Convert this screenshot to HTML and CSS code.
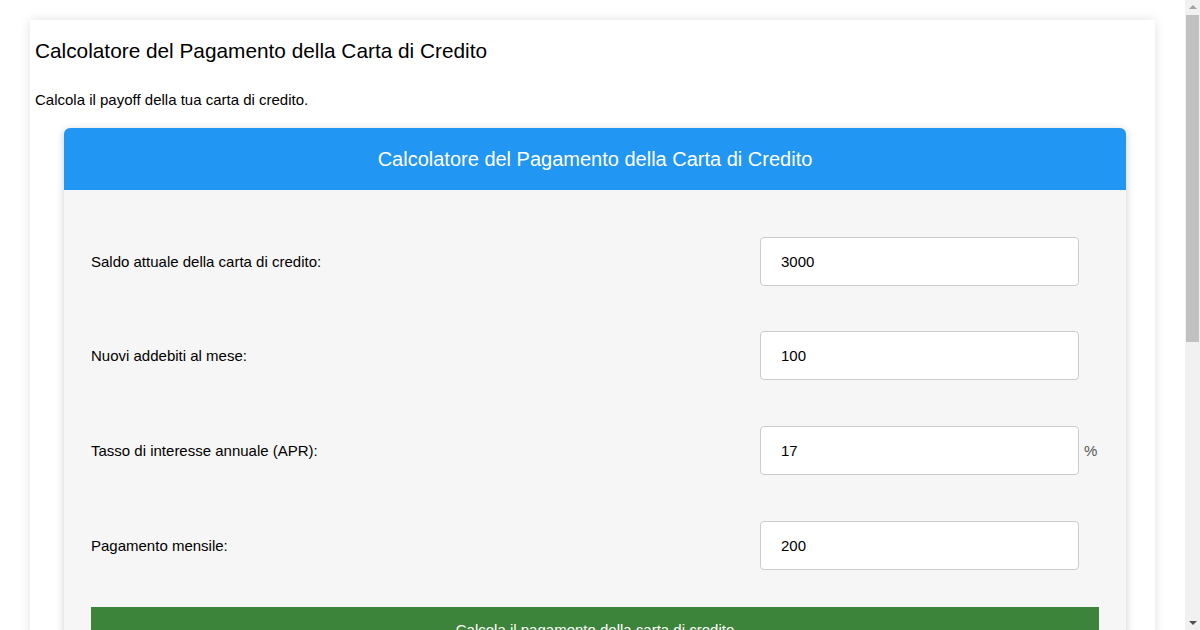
FILE: index.html
```html
<!DOCTYPE html>
<html lang="it">
<head>
<meta charset="utf-8">
<title>Calcolatore del Pagamento della Carta di Credito</title>
<link rel="stylesheet" href="styles.css">
</head>
<body>
<div class="page">
  <h1 class="title">Calcolatore del Pagamento della Carta di Credito</h1>
  <p class="intro">Calcola il payoff della tua carta di credito.</p>
  <div class="calc">
    <div class="calc-head">Calcolatore del Pagamento della Carta di Credito</div>
    <div class="calc-body">
      <div class="rows">
        <label class="lbl" for="bal">Saldo attuale della carta di credito:</label>
        <input class="inp" id="bal" type="text" value="3000">
        <span class="unit"></span>

        <label class="lbl" for="chg">Nuovi addebiti al mese:</label>
        <input class="inp" id="chg" type="text" value="100">
        <span class="unit"></span>

        <label class="lbl" for="apr">Tasso di interesse annuale (APR):</label>
        <input class="inp" id="apr" type="text" value="17">
        <span class="unit">%</span>

        <label class="lbl" for="pay">Pagamento mensile:</label>
        <input class="inp" id="pay" type="text" value="200">
        <span class="unit"></span>
      </div>
      <button class="btn" type="button">Calcola il pagamento della carta di credito</button>
      <div class="results">
        <p class="res-line">Mesi necessari per estinguere il debito: 32</p>
        <p class="res-line">Interessi totali pagati: 758,42</p>
        <p class="res-line">Totale pagato: 6.358,42</p>
      </div>
    </div>
  </div>
  <div class="notes">
    <h2 class="notes-title">Come funziona</h2>
    <p class="notes-text">Inserisci il saldo attuale, i nuovi addebiti mensili, il tasso di interesse annuale e il pagamento mensile per calcolare il tempo necessario per saldare la tua carta di credito.</p>
  </div>
</div>
<div class="sbar" aria-hidden="true">
  <div class="sbar-up"></div>
  <div class="sbar-thumb"></div>
  <div class="sbar-down"></div>
</div>
</body>
</html>
```
FILE: styles.css
```css
html, body {
  margin: 0;
  padding: 0;
  background: #ffffff;
}
body {
  font-family: "Liberation Sans", Arial, sans-serif;
  color: #000;
  padding-right: 15px;
}
.page {
  width: 1115px;
  margin: 20px auto 40px;
  padding: 5px 5px 30px;
  background: #fff;
  box-shadow: 0 0 10px rgba(0, 0, 0, 0.12);
}
.title {
  font-size: 20.8px;
  font-weight: normal;
  margin: 14px 0 0;
  line-height: 24px;
}
.intro {
  font-size: 15px;
  margin: 28px 0 0;
  line-height: 18px;
}
.calc {
  width: 1062px;
  margin: 19px 0 0 29px;
  border-radius: 6px;
  overflow: hidden;
  background: #f6f6f6;
  box-shadow: 0 2px 8px rgba(0, 0, 0, 0.2);
}
.calc-head {
  background: #2196f3;
  color: #fff;
  font-size: 20px;
  height: 62px;
  line-height: 62px;
  text-align: center;
}
.calc-body {
  padding: 24px 27px 30px;
}
.rows {
  display: grid;
  grid-template-columns: 1fr 319px 20px;
  grid-auto-rows: 94.67px;
  align-items: center;
}
.lbl {
  font-size: 15px;
}
.inp {
  box-sizing: border-box;
  width: 319px;
  height: 49px;
  border: 1px solid #ccc;
  border-radius: 4px;
  background: #fff;
  padding: 0 20px;
  font-family: "Liberation Sans", Arial, sans-serif;
  font-size: 15px;
  color: #000;
}
.unit {
  font-size: 15px;
  color: #555;
  padding-left: 5px;
}
.btn {
  display: block;
  width: 100%;
  margin-top: 14px;
  height: 45px;
  border: none;
  background: #3b8439;
  color: #fff;
  font-family: "Liberation Sans", Arial, sans-serif;
  font-size: 15px;
  padding: 0;
}
.results {
  margin-top: 24px;
  padding: 20px;
  background: #fff;
  border: 1px solid #ddd;
  border-radius: 4px;
}
.res-line {
  font-size: 15px;
  margin: 8px 0;
}
.notes {
  padding: 20px 0 0;
}
.notes-title {
  font-size: 18px;
  font-weight: normal;
  margin: 0 0 10px;
}
.notes-text {
  font-size: 15px;
  line-height: 22px;
  margin: 0 0 200px;
}
.sbar {
  position: fixed;
  top: 0;
  right: 0;
  width: 15px;
  height: 100%;
  background: #f1f1f1;
  display: flex;
  flex-direction: column;
  align-items: center;
}
.sbar-up, .sbar-down {
  width: 0;
  height: 0;
  border-left: 4px solid transparent;
  border-right: 4px solid transparent;
}
.sbar-up {
  border-bottom: 4px solid #a3a3a3;
  margin: 5px 0 6px;
}
.sbar-thumb {
  width: 13px;
  height: 327px;
  background: #c1c1c1;
}
.sbar-down {
  border-top: 4px solid #505050;
  margin-top: auto;
  margin-bottom: 5px;
}
```
